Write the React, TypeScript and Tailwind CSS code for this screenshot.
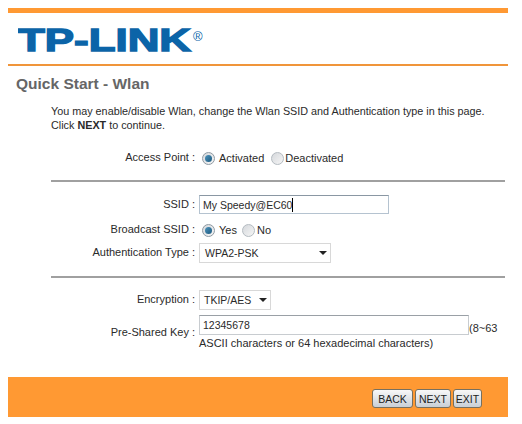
import React from "react";

function Radio({ on }: { on?: boolean }) {
  return (
    <span className={`inline-flex items-center justify-center w-[13px] h-[13px] rounded-full border shrink-0 bg-gradient-to-br from-[#d5d8dc] to-[#f6f6f6] ${on ? "border-[#8f9aa3]" : "border-[#b4bbc1]"}`}>
      {on && <span className="block w-[7px] h-[7px] rounded-full bg-gradient-to-br from-[#4d93bb] to-[#1c5a80]" />}
    </span>
  );
}

function Caret() {
  return (
    <svg width="8" height="4" viewBox="0 0 8 4" className="shrink-0">
      <path d="M0 0H8L4 4Z" fill="#222" />
    </svg>
  );
}

function Row({ label, className, children }: { label: string; className: string; children: React.ReactNode }) {
  return (
    <div className={`flex items-center ${className}`}>
      <div className="w-[190px] text-right pr-[3px] pb-[2px] shrink-0 whitespace-nowrap">{label} :</div>
      <div className="flex items-center pl-[1px]">{children}</div>
    </div>
  );
}

function Btn({ children, className }: { children: React.ReactNode; className: string }) {
  return (
    <div className={`h-[19px] flex items-center justify-center rounded-[3px] border border-[#77705f] bg-gradient-to-b from-[#f8f8f8] to-[#c9cfd6] text-[10.5px] text-[#222] ${className}`}>
      {children}
    </div>
  );
}

export default function App() {
  return (
    <div className="w-[522px] h-[424px] bg-white pt-[8px] pl-[8px] text-[11px] leading-[14px] text-[#2a2a2a] font-['Liberation_Sans',Arial,sans-serif] overflow-hidden">
      <div className="w-[500px]">
        <div className="h-[5px] bg-[#ff9933]" />
        <div className="h-[51px] pl-[10px] pt-[8px]">
          <svg width="190" height="38" viewBox="0 0 190 38" className="block">
            <text x="0" y="30" fontFamily="'Liberation Sans', Arial, sans-serif" fontWeight="700" fontSize="32" fill="#0b64a8" stroke="#0b64a8" strokeWidth="1.4" textLength="173" lengthAdjust="spacingAndGlyphs">TP-LINK</text>
            <text x="175" y="20" fontFamily="'Liberation Sans', Arial, sans-serif" fontSize="13" fill="#0b64a8">®</text>
          </svg>
        </div>
        <div className="h-[2px] bg-[#f0953a]" />
        <h1 className="mt-[9px] ml-[8px] text-[15.5px] leading-[18px] font-bold text-[#666]">Quick Start - Wlan</h1>
        <p className="mt-[11px] ml-[43px] text-[10.8px]">
          You may enable/disable Wlan, change the Wlan SSID and Authentication type in this page.
          <br />
          Click <b>NEXT</b> to continue.
        </p>

        <Row label="Access Point" className="mt-[19px] h-[14px]">
          <span className="ml-[3px] flex"><Radio on /></span>
          <span className="ml-[4px]">Activated</span>
          <span className="ml-[7px] flex"><Radio /></span>
          <span className="ml-[1px]">Deactivated</span>
        </Row>
        <div className="h-[2px] bg-[#a0a0a0] ml-[43px] mr-[3px] mt-[15px]" />

        <Row label="SSID" className="mt-[13px] h-[19px]">
          <div className="w-[190px] h-[19px] border border-[#b5c3d0] border-t-[#8a97a3] flex items-center pl-[3px] text-[10.5px]">
            My Speedy@EC60<span className="w-px h-[14px] bg-black" />
          </div>
        </Row>
        <Row label="Broadcast SSID" className="mt-[9px] h-[14px]">
          <span className="ml-[3px] flex"><Radio on /></span>
          <span className="ml-[4px]">Yes</span>
          <span className="ml-[5px] flex"><Radio /></span>
          <span className="ml-[2px]">No</span>
        </Row>
        <Row label="Authentication Type" className="mt-[6px] h-[20px]">
          <div className="w-[132px] h-[20px] border border-[#d8d8d8] flex items-center justify-between pl-[5px] pr-[3px] text-[10.5px]">
            WPA2-PSK
            <Caret />
          </div>
        </Row>
        <div className="h-[2px] bg-[#a0a0a0] ml-[43px] mr-[3px] mt-[13px]" />

        <Row label="Encryption" className="mt-[12px] h-[20px]">
          <div className="w-[72px] h-[20px] border border-[#d8d8d8] flex items-center justify-between pl-[4px] pr-[3px] text-[10.5px]">
            TKIP/AES
            <Caret />
          </div>
        </Row>
        <div className="flex mt-[5px]">
          <div className="w-[190px] text-right pr-[3px] shrink-0 pt-[10px] whitespace-nowrap">Pre-Shared Key :</div>
          <div className="pl-[1px]">
            <div className="flex items-center">
              <div className="w-[270px] h-[20px] border border-[#c8ccd0] border-t-[#9aa0a6] pl-[3px] flex items-center text-[10.5px]">12345678</div>
              <span className="pt-[6px] whitespace-nowrap">(8~63</span>
            </div>
            <div className="mt-[1px]">ASCII characters or 64 hexadecimal characters)</div>
          </div>
        </div>

        <div className="mt-[27px] h-[40px] bg-[#ff9933] flex items-center justify-end pr-[26px] gap-[2px] pt-[3px]">
          <Btn className="w-[41px]">BACK</Btn>
          <Btn className="w-[36px]">NEXT</Btn>
          <Btn className="w-[29px]">EXIT</Btn>
        </div>
      </div>
    </div>
  );
}
